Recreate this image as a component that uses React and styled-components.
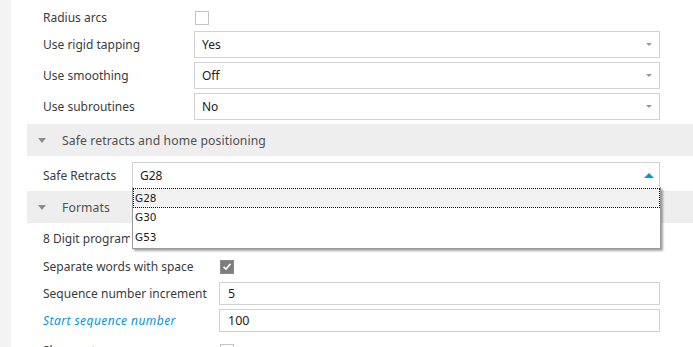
import React from "react";
import styled, { createGlobalStyle } from "styled-components";

const GlobalStyle = createGlobalStyle`
    html, body {
        margin: 0;
        padding: 0;
        background: #ffffff;
        overflow: hidden;
    }
    body {
        font-family: "Noto Sans", "Open Sans", sans-serif;
        font-size: 12px;
        color: #3c3c3c;
    }
`;

const Page = styled.div`
    display: flex;
    width: 693px;
    height: 347px;
    overflow: hidden;
`;

const SideStrip = styled.div`
    width: 11px;
    flex: none;
    background: #f3f3f3;
`;

const Panel = styled.div`
    flex: 1;
    padding-left: 16px;
    display: flex;
    flex-direction: column;
`;

const Group = styled.div`
    display: flex;
    flex-direction: column;
    padding-left: 16px;
    padding-right: 33px;
`;

const Row = styled.div`
    display: flex;
    align-items: center;
    height: ${p => p.$h || 31}px;
    padding-top: ${p => p.$pt || 0}px;
    box-sizing: border-box;
    flex: none;
    position: ${p => (p.$overlay ? "relative" : "static")};
`;

const Label = styled.div`
    width: ${p => p.$w}px;
    flex: none;
    white-space: nowrap;
    color: ${p => (p.$accent ? "#0696d7" : "#3c3c3c")};
    font-style: ${p => (p.$accent ? "italic" : "normal")};
    letter-spacing: ${p => (p.$accent ? "0.45px" : "normal")};
`;

// the part of a label that the open drop list leaves visible
const Clipped = styled.span`
    display: inline-block;
    max-width: ${p => p.$max}px;
    overflow: hidden;
    vertical-align: bottom;
`;

const Checkbox = styled.div`
    width: 14px;
    height: 14px;
    box-sizing: border-box;
    margin-left: 1px;
    border: 1px solid ${p => (p.$checked ? "#8a8a8a" : "#c4c4c4")};
    background: ${p => (p.$checked ? "#7c7c7c" : "#ffffff")};
    display: flex;
    align-items: center;
    justify-content: center;
`;

const SelectBox = styled.div`
    flex: 1;
    height: 27px;
    box-sizing: border-box;
    border: 1px solid #d2d2d2;
    border-bottom: ${p => (p.$open ? "2px solid #0696d7" : "1px solid #d2d2d2")};
    display: flex;
    align-items: center;
    justify-content: space-between;
    padding: 0 5px 0 7px;
    color: #222;
    background: #fff;
`;

const Arrow = styled.span`
    width: 0;
    height: 0;
    margin-right: ${p => (p.$up ? 0 : 2)}px;
    border-left: ${p => (p.$up ? 5 : 3)}px solid transparent;
    border-right: ${p => (p.$up ? 5 : 3)}px solid transparent;
    border-top: ${p => (p.$up ? "none" : "3px solid #9a9a9a")};
    border-bottom: ${p => (p.$up ? "5px solid #0696d7" : "none")};
`;

const TextInput = styled.div`
    flex: 1;
    height: 23px;
    box-sizing: border-box;
    border: 1px solid #d2d2d2;
    display: flex;
    align-items: center;
    padding-left: 8px;
    color: #222;
    font-size: 12.5px;
`;

const SectionHeader = styled.div`
    height: 32px;
    flex: none;
    margin-top: ${p => p.$mt || 0}px;
    background: #eeeeee;
    display: flex;
    align-items: center;
    padding-left: 11px;
    color: #505050;
    font-size: 12.2px;
    letter-spacing: 0.1px;
`;

const HeaderTriangle = styled.span`
    width: 0;
    height: 0;
    border-left: 4.5px solid transparent;
    border-right: 4.5px solid transparent;
    border-top: 5px solid #8c8c8c;
    margin-right: 16px;
`;

const DropList = styled.div`
    position: absolute;
    top: 31px;
    left: 89px;
    right: -1px;
    z-index: 5;
    background: #ffffff;
    border: 1px solid #9a9a9a;
    border-top: none;
    box-shadow: 2px 2px 2px rgba(0, 0, 0, 0.35);
    padding: 1px 0 1px 0;
    font-family: "DejaVu Sans", Verdana, sans-serif;
    font-size: 10.5px;
    color: #1a1a1a;
`;

const DropItem = styled.div`
    height: 19.5px;
    box-sizing: border-box;
    display: flex;
    align-items: center;
    padding-left: 1px;
    background: ${p => (p.$active ? "#f2f2f2" : "#ffffff")};
    border: 1px dotted ${p => (p.$active ? "#111" : "transparent")};
`;

const Check = () => (
    <svg width="10" height="9" viewBox="0 0 10 9">
        <path d="M1.5 4.8 L4 7 L8.5 1.8" fill="none" stroke="#ffffff" strokeWidth="1.6" />
    </svg>
);

const Select = ({ value, open }) => (
    <SelectBox $open={open}>
        <span>{value}</span>
        <Arrow $up={open} />
    </SelectBox>
);

export default function App() {
    return (
        <Page>
            <GlobalStyle />
            <SideStrip />
            <Panel>
                <Group>
                    <Row $h={29} $pt={6}>
                        <Label $w={151}>Radius arcs</Label>
                        <Checkbox />
                    </Row>
                    <Row>
                        <Label $w={151}>Use rigid tapping</Label>
                        <Select value="Yes" />
                    </Row>
                    <Row>
                        <Label $w={151}>Use smoothing</Label>
                        <Select value="Off" />
                    </Row>
                    <Row>
                        <Label $w={151}>Use subroutines</Label>
                        <Select value="No" />
                    </Row>
                </Group>

                <SectionHeader $mt={2}>
                    <HeaderTriangle />
                    Safe retracts and home positioning
                </SectionHeader>
                <Group>
                    <Row $h={35} $pt={4} $overlay>
                        <Label $w={89}>Safe Retracts</Label>
                        <Select value="G28" open />
                        <DropList>
                            <DropItem $active>G28</DropItem>
                            <DropItem>G30</DropItem>
                            <DropItem>G53</DropItem>
                        </DropList>
                    </Row>
                </Group>

                <SectionHeader>
                    <HeaderTriangle />
                    Formats
                </SectionHeader>
                <Group>
                    <Row $h={30}>
                        <Label $w={176}>
                            <Clipped $max={87}>8 Digit program numbers</Clipped>
                        </Label>
                        <Checkbox />
                    </Row>
                    <Row $h={27}>
                        <Label $w={176}>Separate words with space</Label>
                        <Checkbox $checked>
                            <Check />
                        </Checkbox>
                    </Row>
                    <Row $h={27}>
                        <Label $w={176}>Sequence number increment</Label>
                        <TextInput>5</TextInput>
                    </Row>
                    <Row $h={27}>
                        <Label $w={176} $accent>Start sequence number</Label>
                        <TextInput>100</TextInput>
                    </Row>
                    <Row $h={27} $pt={6}>
                        <Label $w={176}>Show notes</Label>
                        <Checkbox />
                    </Row>
                </Group>
            </Panel>
        </Page>
    );
}
